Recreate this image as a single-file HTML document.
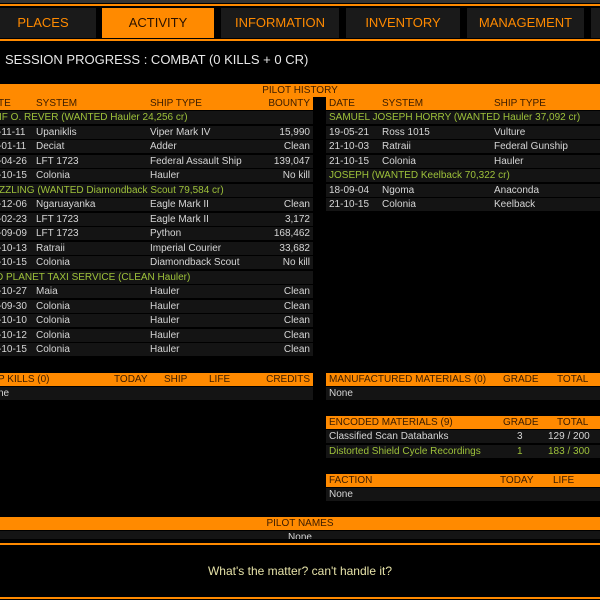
<!DOCTYPE html><html><head><style>
*{margin:0;padding:0;box-sizing:border-box}
body{width:600px;height:600px;background:#000;overflow:hidden;position:relative;font-family:"Liberation Sans",sans-serif;font-size:10px;color:#d6d6d6}
.a{position:absolute}
.tab{position:absolute;top:8px;height:30px;background:#1a1a1a;color:#ff8a00;font-size:13px;line-height:30px;text-align:center}
.tab.on{background:#ff8a00;color:#2a1200}
.hd{position:absolute;height:13px;background:#ff8a00;color:#3a1c00;line-height:13px;white-space:nowrap}
.tb{position:absolute}
.r{position:relative;height:13px;margin-bottom:1.5px;background:#141414;line-height:13px;white-space:nowrap}
.r span,.hd span{position:absolute}
.g{color:#9ec23a}
</style></head><body>
<div class="a" style="left:0;top:0;width:600px;height:3px;background:#333"></div>
<div class="a" style="left:0;top:4px;width:600px;height:2px;background:#ff8a00"></div>
<div class="tab" style="left:-10px;width:106px">PLACES</div>
<div class="tab on" style="left:102px;width:112px">ACTIVITY</div>
<div class="tab" style="left:221px;width:118px">INFORMATION</div>
<div class="tab" style="left:346px;width:114px">INVENTORY</div>
<div class="tab" style="left:467px;width:117px">MANAGEMENT</div>
<div class="tab" style="left:591px;width:20px"></div>
<div class="a" style="left:0;top:39px;width:600px;height:2px;background:#ff8a00"></div>
<div class="a" style="left:5px;top:52px;font-size:13px;color:#e8e8e8">SESSION PROGRESS : COMBAT (0 KILLS + 0 CR)</div>

<div class="hd" style="left:0;top:84px;width:600px;text-align:center">PILOT HISTORY</div>
<div class="hd" style="left:0;top:97px;width:313px"><span style="left:-2px">TE</span><span style="left:36px">SYSTEM</span><span style="left:150px">SHIP TYPE</span><span style="right:3px">BOUNTY</span></div>
<div class="hd" style="left:326px;top:97px;width:274px"><span style="left:3px">DATE</span><span style="left:56px">SYSTEM</span><span style="left:168px">SHIP TYPE</span></div>

<div class="tb" style="left:0;top:111px;width:313px">
<div class="r g"><span style="left:-1px">IF O. REVER (WANTED Hauler 24,256 cr)</span></div>
<div class="r"><span style="left:-2px">-11-11</span><span style="left:36px">Upaniklis</span><span style="left:150px">Viper Mark IV</span><span style="right:3px">15,990</span></div>
<div class="r"><span style="left:-2px">-01-11</span><span style="left:36px">Deciat</span><span style="left:150px">Adder</span><span style="right:3px">Clean</span></div>
<div class="r"><span style="left:-2px">-04-26</span><span style="left:36px">LFT 1723</span><span style="left:150px">Federal Assault Ship</span><span style="right:3px">139,047</span></div>
<div class="r"><span style="left:-2px">-10-15</span><span style="left:36px">Colonia</span><span style="left:150px">Hauler</span><span style="right:3px">No kill</span></div>
<div class="r g"><span style="left:-1px">ZZLING (WANTED Diamondback Scout 79,584 cr)</span></div>
<div class="r"><span style="left:-2px">-12-06</span><span style="left:36px">Ngaruayanka</span><span style="left:150px">Eagle Mark II</span><span style="right:3px">Clean</span></div>
<div class="r"><span style="left:-2px">-02-23</span><span style="left:36px">LFT 1723</span><span style="left:150px">Eagle Mark II</span><span style="right:3px">3,172</span></div>
<div class="r"><span style="left:-2px">-09-09</span><span style="left:36px">LFT 1723</span><span style="left:150px">Python</span><span style="right:3px">168,462</span></div>
<div class="r"><span style="left:-2px">-10-13</span><span style="left:36px">Ratraii</span><span style="left:150px">Imperial Courier</span><span style="right:3px">33,682</span></div>
<div class="r"><span style="left:-2px">-10-15</span><span style="left:36px">Colonia</span><span style="left:150px">Diamondback Scout</span><span style="right:3px">No kill</span></div>
<div class="r g"><span style="left:-4px">D PLANET TAXI SERVICE (CLEAN Hauler)</span></div>
<div class="r"><span style="left:-2px">-10-27</span><span style="left:36px">Maia</span><span style="left:150px">Hauler</span><span style="right:3px">Clean</span></div>
<div class="r"><span style="left:-2px">-09-30</span><span style="left:36px">Colonia</span><span style="left:150px">Hauler</span><span style="right:3px">Clean</span></div>
<div class="r"><span style="left:-2px">-10-10</span><span style="left:36px">Colonia</span><span style="left:150px">Hauler</span><span style="right:3px">Clean</span></div>
<div class="r"><span style="left:-2px">-10-12</span><span style="left:36px">Colonia</span><span style="left:150px">Hauler</span><span style="right:3px">Clean</span></div>
<div class="r"><span style="left:-2px">-10-15</span><span style="left:36px">Colonia</span><span style="left:150px">Hauler</span><span style="right:3px">Clean</span></div>
</div>

<div class="tb" style="left:326px;top:111px;width:274px">
<div class="r g"><span style="left:3px">SAMUEL JOSEPH HORRY (WANTED Hauler 37,092 cr)</span></div>
<div class="r"><span style="left:3px">19-05-21</span><span style="left:56px">Ross 1015</span><span style="left:168px">Vulture</span></div>
<div class="r"><span style="left:3px">21-10-03</span><span style="left:56px">Ratraii</span><span style="left:168px">Federal Gunship</span></div>
<div class="r"><span style="left:3px">21-10-15</span><span style="left:56px">Colonia</span><span style="left:168px">Hauler</span></div>
<div class="r g"><span style="left:3px">JOSEPH (WANTED Keelback 70,322 cr)</span></div>
<div class="r"><span style="left:3px">18-09-04</span><span style="left:56px">Ngoma</span><span style="left:168px">Anaconda</span></div>
<div class="r"><span style="left:3px">21-10-15</span><span style="left:56px">Colonia</span><span style="left:168px">Keelback</span></div>
</div>

<div class="hd" style="left:0;top:373px;width:313px"><span style="left:-2px">P KILLS (0)</span><span style="left:114px">TODAY</span><span style="left:164px">SHIP</span><span style="left:209px">LIFE</span><span style="right:3px">CREDITS</span></div>
<div class="tb" style="left:0;top:387px;width:313px"><div class="r"><span style="left:-2px">ne</span></div></div>

<div class="hd" style="left:326px;top:373px;width:274px"><span style="left:3px">MANUFACTURED MATERIALS (0)</span><span style="left:177px">GRADE</span><span style="left:231px">TOTAL</span></div>
<div class="tb" style="left:326px;top:387px;width:274px"><div class="r"><span style="left:3px">None</span></div></div>

<div class="hd" style="left:326px;top:416px;width:274px"><span style="left:3px">ENCODED MATERIALS (9)</span><span style="left:177px">GRADE</span><span style="left:231px">TOTAL</span></div>
<div class="tb" style="left:326px;top:430px;width:274px">
<div class="r"><span style="left:3px">Classified Scan Databanks</span><span style="left:191px">3</span><span style="left:222px">129 / 200</span></div>
<div class="r g"><span style="left:3px">Distorted Shield Cycle Recordings</span><span style="left:191px">1</span><span style="left:222px">183 / 300</span></div>
</div>

<div class="hd" style="left:326px;top:474px;width:274px"><span style="left:3px">FACTION</span><span style="left:174px">TODAY</span><span style="left:227px">LIFE</span></div>
<div class="tb" style="left:326px;top:488px;width:274px"><div class="r"><span style="left:3px">None</span></div></div>

<div class="hd" style="left:0;top:517px;width:600px;text-align:center">PILOT NAMES</div>
<div class="a" style="left:0;top:531px;width:600px;height:8px;background:#141414;overflow:hidden;text-align:center;line-height:13px">None</div>
<div class="a" style="left:0;top:543px;width:600px;height:2px;background:#ff8a00"></div>
<div class="a" style="left:0;top:564px;width:600px;text-align:center;font-size:12px;color:#e6e2a8">What's the matter? can't handle it?</div>
<div class="a" style="left:0;top:597px;width:600px;height:2px;background:#ff8a00"></div>
</body></html>
